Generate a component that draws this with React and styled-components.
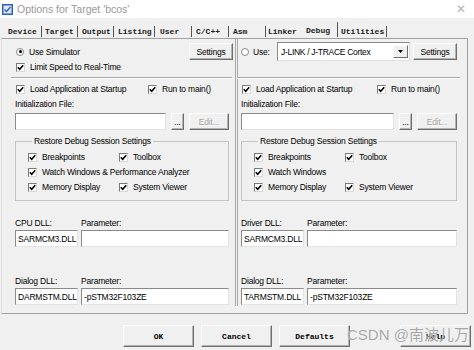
import React from 'react';
import styled, { createGlobalStyle } from 'styled-components';

const GlobalStyle = createGlobalStyle`
  html, body {
    margin: 0;
    padding: 0;
    background: #f0f0f0;
  }
`;

const tabs = [
  { label: 'Device', w: 38, pad: 4 },
  { label: 'Target', w: 36, pad: 3 },
  { label: 'Output', w: 36, pad: 4 },
  { label: 'Listing', w: 41, pad: 4 },
  { label: 'User', w: 37, pad: 5 },
  { label: 'C/C++', w: 37, pad: 4 },
  { label: 'Asm', w: 37, pad: 4 },
  { label: 'Linker', w: 35, pad: 2, noSep: true },
  { label: 'Debug', w: 37, pad: 5, active: true },
  { label: 'Utilities', w: 49, pad: 3 },
];

const Window = styled.div`
  position: relative;
  width: 474px;
  height: 350px;
  background: #f0f0f0;
  overflow: hidden;
  font-family: "Liberation Sans", Arial, sans-serif;
  font-size: 8.5px;
  letter-spacing: -0.2px;
  color: #000;
`;

const TitleBar = styled.div`
  height: 18px;
  background: #fff;
  display: flex;
  align-items: center;
  padding-left: 2px;
  gap: 4px;
`;

const TitleText = styled.span`
  font-size: 10.5px;
  letter-spacing: 0;
  color: #9a9a9a;
`;

const CloseGlyph = styled.span`
  margin-left: auto;
  margin-right: 8px;
  font-size: 12px;
  color: #b4b4b4;
`;

const TabStrip = styled.div`
  height: 20px;
  display: flex;
  align-items: flex-end;
  padding-left: 4px;
  box-sizing: border-box;
`;

const Tab = styled.div`
  box-sizing: border-box;
  width: ${p => p.$w}px;
  height: ${p => (p.$active ? 15 : 11)}px;
  margin-bottom: 1px;
  padding-left: ${p => p.$pad}px;
  padding-top: ${p => (p.$active ? 3 : 0)}px;
  border-right: 1px solid ${p => (p.$noSep ? 'transparent' : '#555')};
  font-family: "Liberation Mono", "Courier New", monospace;
  font-weight: bold;
  font-size: 8px;
  line-height: 11px;
  letter-spacing: 0;
  color: #222;
  white-space: nowrap;
`;

const Frame = styled.div`
  box-sizing: border-box;
  margin: 0 6px 0 1px;
  height: 276px;
  border: 1px solid #a0a0a0;
  border-left-color: #dedede;
  display: flex;
  align-items: flex-start;
`;

const Column = styled.div`
  box-sizing: border-box;
  height: 267px;
  display: flex;
  flex-direction: column;
  ${p => (p.$left
    ? 'width: 234px; padding: 3px 6px 0 13px; border-right: 1px solid #a8a8a8;'
    : 'flex: 1; margin-left: 1px; padding: 3px 10px 0 3px; border-left: 1px solid #a8a8a8;')}
`;

const TopRow = styled.div`
  height: 19px;
  display: flex;
  align-items: center;
`;

const Row = styled.div`
  height: 12px;
  margin-top: ${p => p.$mt || 0}px;
  display: flex;
  align-items: center;
`;

const Cell = styled.div`
  width: ${p => p.$w}px;
  flex-shrink: 0;
  display: flex;
  align-items: center;
`;

const Option = styled.label`
  display: flex;
  align-items: center;
  gap: ${p => p.$gap || 5}px;
  line-height: 12px;
  white-space: nowrap;
  margin-left: ${p => p.$ml || 0}px;
`;

const Box = styled.span`
  box-sizing: border-box;
  width: 9px;
  height: 9px;
  background: #fff;
  border: 1px solid #7a7a7a;
  border-right-color: #d8d8d8;
  border-bottom-color: #d8d8d8;
  display: flex;
  align-items: center;
  justify-content: center;
`;

const RadioDot = styled.span`
  box-sizing: border-box;
  width: 8px;
  height: 8px;
  border-radius: 50%;
  background: #fff;
  border: 1px solid #8a8a8a;
  display: flex;
  align-items: center;
  justify-content: center;
  &::after {
    content: "";
    width: 3px;
    height: 3px;
    border-radius: 50%;
    background: ${p => (p.$on ? '#000' : 'transparent')};
  }
`;

const RaisedButton = styled.div`
  box-sizing: border-box;
  width: ${p => p.$w}px;
  height: ${p => p.$h || 17}px;
  flex-shrink: 0;
  background: #f0f0f0;
  border: 1px solid;
  border-color: #fff #6e6e6e #6e6e6e #fff;
  box-shadow: inset -1px -1px 0 #b4b4b4;
  display: flex;
  align-items: center;
  justify-content: center;
  color: ${p => (p.$disabled ? '#a3a3a3' : '#000')};
  text-shadow: ${p => (p.$disabled ? '1px 1px 0 #fff' : 'none')};
  margin-left: ${p => p.$ml || 0}px;
  margin-right: ${p => p.$mr || 0}px;
`;

const Dropdown = styled.div`
  box-sizing: border-box;
  width: 133px;
  height: 19px;
  margin-left: auto;
  margin-right: 3px;
  background: #fff;
  border: 1px solid #8a8a8a;
  border-right-color: #e0e0e0;
  border-bottom-color: #e0e0e0;
  display: flex;
  align-items: center;
  padding: 0 1px 0 3px;
  letter-spacing: -0.3px;
`;

const DropArrow = styled.span`
  margin-left: auto;
  box-sizing: border-box;
  width: 15px;
  height: 13px;
  border: 1px solid;
  border-color: #fff #6e6e6e #6e6e6e #fff;
  background: #f0f0f0;
  display: flex;
  align-items: center;
  justify-content: center;
`;

const Separator = styled.div`
  margin: 4px -3px 0 -4px;
  height: 0;
  border-top: 1px solid #a8a8a8;
  border-bottom: 1px solid #fff;
`;

const TextBox = styled.div`
  box-sizing: border-box;
  height: 17px;
  background: #fff;
  border: 1px solid #8a8a8a;
  border-right-color: #e3e3e3;
  border-bottom-color: #e3e3e3;
  padding-left: 2px;
  display: flex;
  align-items: center;
  white-space: nowrap;
  overflow: hidden;
  ${p => (p.$grow ? 'flex: 1;' : '')}
`;

const InputRow = styled.div`
  margin-top: 3px;
  display: flex;
  align-items: center;
  gap: 5px;
`;

const GroupBox = styled.fieldset`
  margin: 6px 0 0 0;
  padding: 4px 0 7px 12px;
  min-width: 0;
  border: 1px solid #c4c4c4;
  display: flex;
  flex-direction: column;
  gap: 3px;
`;

const Legend = styled.legend`
  margin-left: 4px;
  padding: 0 2px;
  line-height: 11px;
`;

const DllGrid = styled.div`
  margin-top: ${p => p.$mt}px;
  display: grid;
  grid-template-columns: 63px 1fr;
  column-gap: 3px;
  row-gap: 1px;
  line-height: 12px;
`;

const Footer = styled.div`
  margin-top: 11px;
  padding: 0 3px 0 123px;
  display: flex;
  gap: 7px;
`;

const DialogButton = styled(RaisedButton)`
  font-family: "Liberation Mono", "Courier New", monospace;
  font-weight: bold;
  font-size: 8px;
  letter-spacing: 0;
  ${p => (p.$push ? 'margin-left: auto;' : '')}
`;

const Watermark = styled.div`
  position: absolute;
  left: 347px;
  top: 326px;
  font-family: "Liberation Sans", "Noto Sans CJK SC", sans-serif;
  font-size: 15px;
  letter-spacing: 0;
  line-height: 18px;
  color: rgba(150, 150, 150, 0.85);
  text-shadow: 0 0 1px #fff;
  white-space: nowrap;
`;

function CheckIcon() {
  return (
    <svg width="7" height="7" viewBox="0 0 7 7">
      <path d="M0.8 3.2 L2.7 5.2 L6.2 1.2" fill="none" stroke="#000" strokeWidth="1.6" />
    </svg>
  );
}

function CheckOption({ children, ml }) {
  return (
    <Option $ml={ml}>
      <Box><CheckIcon /></Box>
      {children}
    </Option>
  );
}

function TitleIcon() {
  return (
    <svg width="11" height="11" viewBox="0 0 11 11">
      <rect x="0" y="0" width="11" height="11" fill="#2c5fc4" />
      <rect x="1.5" y="1.5" width="8" height="8" fill="#dfe8fb" />
      <path d="M2.5 5.5 L4.5 7.5 L8.5 3" fill="none" stroke="#2c5fc4" strokeWidth="1.4" />
    </svg>
  );
}

function DebugColumn({ left }) {
  return (
    <Column $left={left}>
      {left ? (
        <TopRow>
          <Option $ml={1}><RadioDot $on />Use Simulator</Option>
          <RaisedButton $w={44} $ml={0} style={{ marginLeft: 'auto' }} $mr={-4}>Settings</RaisedButton>
        </TopRow>
      ) : (
        <TopRow>
          <Option $gap={4}><RadioDot />Use:</Option>
          <Dropdown>
            J-LINK / J-TRACE Cortex
            <DropArrow>
              <svg width="5" height="3" viewBox="0 0 5 3"><path d="M0 0 H5 L2.5 3 Z" fill="#000" /></svg>
            </DropArrow>
          </Dropdown>
          <RaisedButton $w={44}>Settings</RaisedButton>
        </TopRow>
      )}
      <Row>
        {left && <CheckOption ml={1}>Limit Speed to Real-Time</CheckOption>}
      </Row>
      <Separator />
      <Row $mt={4}>
        <Cell $w={left ? 133 : 136}>
          <CheckOption ml={1}>Load Application at Startup</CheckOption>
        </Cell>
        <CheckOption>Run to main()</CheckOption>
      </Row>
      <Row $mt={3}>Initialization File:</Row>
      <InputRow>
        <TextBox $grow />
        <RaisedButton $w={13}>...</RaisedButton>
        <RaisedButton $w={40} $disabled>Edit...</RaisedButton>
      </InputRow>
      <GroupBox>
        <Legend>Restore Debug Session Settings</Legend>
        <Row>
          <Cell $w={91}><CheckOption>Breakpoints</CheckOption></Cell>
          <CheckOption>Toolbox</CheckOption>
        </Row>
        <Row>
          <CheckOption>{left ? 'Watch Windows & Performance Analyzer' : 'Watch Windows'}</CheckOption>
        </Row>
        <Row>
          <Cell $w={91}><CheckOption>Memory Display</CheckOption></Cell>
          <CheckOption>System Viewer</CheckOption>
        </Row>
      </GroupBox>
      <DllGrid $mt={16}>
        <span>{left ? 'CPU DLL:' : 'Driver DLL:'}</span>
        <span>Parameter:</span>
        <TextBox>SARMCM3.DLL</TextBox>
        <TextBox />
      </DllGrid>
      <DllGrid $mt={28}>
        <span>Dialog DLL:</span>
        <span>Parameter:</span>
        <TextBox>{left ? 'DARMSTM.DLL' : 'TARMSTM.DLL'}</TextBox>
        <TextBox>-pSTM32F103ZE</TextBox>
      </DllGrid>
    </Column>
  );
}

export default function App() {
  return (
    <Window>
      <GlobalStyle />
      <TitleBar>
        <TitleIcon />
        <TitleText>Options for Target 'bcos'</TitleText>
        <CloseGlyph>✕</CloseGlyph>
      </TitleBar>
      <TabStrip>
        {tabs.map(t => (
          <Tab key={t.label} $w={t.w} $pad={t.pad} $active={t.active} $noSep={t.noSep}>
            {t.label}
          </Tab>
        ))}
      </TabStrip>
      <Frame>
        <DebugColumn left />
        <DebugColumn />
      </Frame>
      <Footer>
        <DialogButton $w={71} $h={22}>OK</DialogButton>
        <DialogButton $w={71} $h={22}>Cancel</DialogButton>
        <DialogButton $w={71} $h={22}>Defaults</DialogButton>
        <DialogButton $w={71} $h={22} $push>Help</DialogButton>
      </Footer>
      <Watermark>CSDN @南波儿万</Watermark>
    </Window>
  );
}
